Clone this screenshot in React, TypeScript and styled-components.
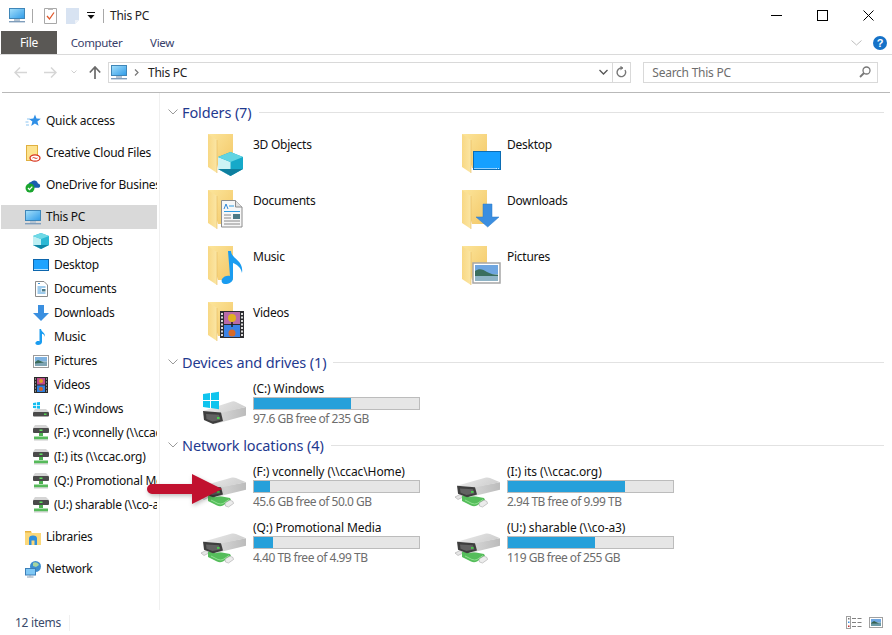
import React from "react";
import styled, { createGlobalStyle } from "styled-components";

const Global = createGlobalStyle`
  html, body { margin: 0; padding: 0; background: #fff; }
  body { font-family: "Noto Sans", "Open Sans", "Liberation Sans", sans-serif; font-size: 12px; color: #000; }
  svg { display: block; flex: none; }
`;

const Page = styled.div`
  position: relative; width: 892px; height: 635px; display: flex; flex-direction: column; overflow: hidden; background: #fff;
  letter-spacing: -0.25px;
`;
const TitleBar = styled.div`height: 31px; display: flex; align-items: center; padding-left: 9px;`;
const QatIcon = styled.div<{ $gap: number }>`margin-right: ${p => p.$gap}px;`;
const QatSep = styled.div<{ $gap: number }>`width: 1px; height: 14px; background: #a8a8a8; margin-right: ${p => p.$gap}px;`;
const TitleText = styled.div`flex: 1; color: #222; margin-left: -1px;`;
const WinButtons = styled.div`display: flex; margin-right: 1px;`;
const WinButton = styled.div`width: 46px; height: 31px; display: flex; align-items: center; justify-content: center;`;

const Tabs = styled.div`height: 24px; box-sizing: border-box; display: flex; align-items: stretch; padding-left: 1px; border-bottom: 1px solid #dadada;`;
const FileTab = styled.div`width: 56px; background: #5a5855; color: #fff; display: flex; align-items: center; justify-content: center;`;
const Tab = styled.div<{ $w: number }>`width: ${p => p.$w}px; color: #38406a; display: flex; align-items: center; justify-content: center; font-size: 11.5px; letter-spacing: -0.35px;`;
const TabRight = styled.div`flex: 1; display: flex; justify-content: flex-end; align-items: center; gap: 11px; padding-right: 5px;`;

const Nav = styled.div`height: 38px; box-sizing: border-box; display: flex; align-items: center; padding: 0 12px 3px 12px; margin: 0 2px; border-bottom: 1px solid #b9b9b9;`;
const NavArrow = styled.div<{ $gap: number }>`margin-right: ${p => p.$gap}px;`;
const Address = styled.div`width: 524px; height: 21px; box-sizing: border-box; border: 1px solid #d9d9d9; display: flex; align-items: center; padding-left: 2px; color: #222;`;
const AddressChevron = styled.svg`margin-left: 7px;`;
const AddressText = styled.div`flex: 1; margin-left: 9px;`;
const AddressEnd = styled.div`width: 17px; height: 100%; border-left: 1px solid #d9d9d9; display: flex; align-items: center; justify-content: center; margin-left: 4px;`;
const Search = styled.div`width: 235px; height: 21px; box-sizing: border-box; border: 1px solid #d9d9d9; margin-left: 12px; display: flex; align-items: center; justify-content: space-between; padding: 0 6px 0 8px; color: #6d6d6d;`;

const Main = styled.div`flex: 1; display: flex; min-height: 0;`;
const Sidebar = styled.div`width: 156px; margin-left: 1px; margin-right: 2px; padding-top: 16px; flex: none; overflow: hidden;`;
const SideGroup = styled.div`margin-bottom: 8px;`;
const SideRow = styled.div<{ $level: number; $active?: boolean }>`
  height: 24px; display: flex; align-items: center; white-space: nowrap; overflow: hidden;
  padding-left: ${p => (p.$level ? 32 : 24)}px;
  background: ${p => (p.$active ? "#d9d9d9" : "transparent")};
  color: #111;
`;
const SideIcon = styled.div`width: 16px; height: 16px; margin-right: 5px; display: flex; align-items: center; justify-content: center; flex: none;`;
const SideLabel = styled.span`padding-bottom: 2px;`;
const Divider = styled.div`width: 1px; background: #f0f0f0; flex: none;`;

const Content = styled.div`flex: 1; padding-top: 9px; min-width: 0;`;
const GroupHeader = styled.div`height: 20px; display: flex; align-items: center; padding: 0 8px 0 8px;`;
const GroupTitle = styled.div`font-size: 14.5px; color: #1f3a8f; margin-left: 4px; letter-spacing: -0.12px;`;
const GroupLine = styled.div`flex: 1; height: 1px; background: #e2e2e2; margin-left: 7px;`;
const FolderGrid = styled.div`display: grid; grid-template-columns: 254px 254px; padding: 8px 0 0 48px; margin-bottom: -2px;`;
const FolderItem = styled.div`height: 56px; display: flex;`;
const ItemText = styled.div`line-height: 16px; padding-top: 7px; color: #111;`;
const DriveGrid = styled.div`display: grid; grid-template-columns: 254px 254px; padding: 7px 0 0 41px;`;
const DriveItem = styled.div`height: 56px; display: flex;`;
const DriveInfo = styled.div`width: 167px;`;
const DriveLabel = styled.div`line-height: 16px; height: 18px; padding-top: 2px; box-sizing: border-box; color: #111; white-space: nowrap; letter-spacing: -0.1px;`;
const Bar = styled.div`height: 13px; box-sizing: border-box; border: 1px solid #bcbcbc; background: #e6e6e6;`;
const BarFill = styled.div<{ $pct: number }>`height: 100%; width: ${p => p.$pct}%; background: #26a0da;`;
const DriveSub = styled.div`line-height: 16px; margin-top: 1px; color: #6d6d6d; white-space: nowrap; letter-spacing: -0.5px;`;

const Status = styled.div`height: 25px; display: flex; align-items: center; padding: 0 9px 0 15px; color: #3a4a6a; flex: none;`;
const StatusText = styled.div`width: 54px;`;
const StatusSep = styled.div`width: 1px; height: 16px; background: #f0f0f0;`;
const StatusRight = styled.div`margin-left: auto; display: flex; gap: 7px; align-items: center;`;
const RedArrow = styled.svg`position: absolute; left: 147px; top: 473px; filter: drop-shadow(1px 2px 2px rgba(0,0,0,.25));`;

/* ---------- small icons ---------- */
const Pc = () => (
  <svg width="16" height="15" viewBox="0 0 16 15">
    <defs><linearGradient id="pcg" x1="0" y1="0" x2="1" y2="1"><stop offset="0" stopColor="#a5e0fb" /><stop offset="1" stopColor="#2f9be8" /></linearGradient></defs>
    <rect x="0.5" y="0.5" width="15" height="10" fill="url(#pcg)" stroke="#3f86b8" />
    <rect x="5" y="11" width="6" height="2" fill="#b5c4d2" />
    <rect x="0" y="13" width="16" height="1.4" fill="#7f9dbb" />
  </svg>
);
const Star = () => (
  <svg width="16" height="15" viewBox="0 0 16 15">
    <path d="M10 0.5l1.5 4 4.3 0.3-3.4 2.7 1.2 4.3-3.700-2.400-3.700 2.600 1.200-4.400-3.400-2.700 4.400-.3z" fill="#2f8fe6" />
    <path d="M2 5h3M0.5 8h3M1 11h3" stroke="#8cc5f2" strokeWidth="1" />
  </svg>
);
const CloudFile = () => (
  <svg width="16" height="17" viewBox="0 0 16 17">
    <rect x="1.5" y="0.5" width="11" height="15" fill="#fde38f" stroke="#e0b040" />
    <ellipse cx="10" cy="13" rx="5" ry="3.2" fill="#fff" stroke="#d8321e" strokeWidth="1.3" />
    <path d="M7.5 13c1-1.6 3.6 1.6 5 0" stroke="#d8321e" fill="none" />
  </svg>
);
const OneDrive = () => (
  <svg width="16" height="15" viewBox="0 0 16 15">
    <path d="M4 9a3 3 0 0 1 2-5 4 4 0 0 1 7 1.500 2.300 2.300 0 0 1 1 4.300H4z" fill="#1a5fb0" />
    <circle cx="5" cy="10" r="4.500" fill="#1aa52e" />
    <path d="M3 10l1.500 1.600 2.800-3" stroke="#fff" strokeWidth="1.300" fill="none" />
  </svg>
);
const Cube = () => (
  <svg width="16" height="16" viewBox="0 0 16 16">
    <path d="M8 0l8 3v9l-8 4-8-4V3z" fill="#2cb8d4" />
    <path d="M0 3l8 3v10l-8-4z" fill="#bdeff3" />
    <path d="M8 0l8 3-8 3-8-3z" fill="#6fd9e6" />
    <path d="M8 12l8 0-8 4-8-4z" fill="#0f86a6" />
  </svg>
);
const Desk = () => (
  <svg width="16" height="12" viewBox="0 0 16 12">
    <rect x="0.500" y="0.500" width="15" height="11" fill="#1ea3ff" stroke="#0d66ad" />
    <rect x="1" y="10" width="14" height="1" fill="#b8e2ff" />
  </svg>
);
const Doc = () => (
  <svg width="13" height="16" viewBox="0 0 13 16">
    <path d="M.5.500h8.500l3.500 3.500v11.500H.5z" fill="#fff" stroke="#8a8a8a" />
    <path d="M3 2.500h2M2.500 6h8M2.500 8h4M2.500 10h4M2.500 12h8" stroke="#3f96d8" />
    <rect x="7" y="8" width="3.500" height="2.500" fill="#4a7a88" />
  </svg>
);
const DownArrow = () => (
  <svg width="16" height="16" viewBox="0 0 16 16">
    <path d="M5 0h6v8h5l-8 8-8-8h5z" fill="#3a8fe0" />
  </svg>
);
const Note = () => (
  <svg width="12" height="16" viewBox="0 0 12 16">
    <path d="M4.500 0h1.500c.3 3 4.500 3.500 4 8-.2-2-2-3-3-3.300v8.300c0 2-2 3-4 3s-3-1-2.500-2.500c.5-1.500 2.500-2 4-1.300z" fill="#1a9cf0" />
  </svg>
);
const Pic = () => (
  <svg width="16" height="13" viewBox="0 0 16 13">
    <rect x="0.500" y="0.500" width="15" height="12" fill="#fff" stroke="#9a9a9a" />
    <rect x="2" y="2" width="12" height="4.500" fill="#7fb2e0" />
    <rect x="2" y="6.500" width="12" height="4.500" fill="#7fa4b4" />
    <path d="M2 7l3-2 6 2.500-9 1z" fill="#3a6a5a" />
  </svg>
);
const Film = () => (
  <svg width="14" height="16" viewBox="0 0 14 16">
    <rect width="14" height="16" fill="#2a2a2a" />
    <rect x="3" y="1" width="8" height="6.500" fill="#c04a8a" />
    <rect x="3" y="8.500" width="8" height="6.500" fill="#2f7fe0" />
    <circle cx="7" cy="4" r="2" fill="#e0a020" />
    <circle cx="7" cy="12" r="2" fill="#d06020" />
    <path d="M1 2h1M1 5h1M1 8h1M1 11h1M1 14h1M12 2h1M12 5h1M12 8h1M12 11h1M12 14h1" stroke="#ddd" />
  </svg>
);
const SmallWinDrive = () => (
  <svg width="16" height="15" viewBox="0 0 16 15">
    <path d="M0 1l3-.5v2.500H0zM3.800.300L7 0v3H3.800zM0 3.800h3v2.500l-3-.4zM3.800 3.800H7v3l-3.200-.4z" fill="#14bdf0" />
    <path d="M2 7h11l3 3H0z" fill="#d5d5d5" />
    <rect x="0" y="10" width="16" height="4.500" rx="1" fill="#4a4a4a" />
    <rect x="11" y="11.500" width="2.500" height="1.500" fill="#4fd04f" />
  </svg>
);
const SmallNetDrive = () => (
  <svg width="16" height="16" viewBox="0 0 16 16">
    <path d="M2 0h11l3 3H0z" fill="#d5d5d5" />
    <rect x="0" y="3" width="16" height="5" rx="1" fill="#4a4a4a" />
    <rect x="6.500" y="4.500" width="3" height="1.500" fill="#5fe05f" />
    <path d="M6 8h4v3H6z" fill="#4cb050" />
    <path d="M1 11.500h14v3H1z" fill="#56ba5a" />
    <path d="M1 14.500h14v1H1z" fill="#c8c8c8" />
  </svg>
);
const Lib = () => (
  <svg width="16" height="15" viewBox="0 0 16 15">
    <path d="M0 1h6l1 2h9v12H0z" fill="#fbd87a" />
    <path d="M0 1h6v1.500H0z" fill="#e8b340" />
    <path d="M4 15V8.500a4 3 0 0 1 8 0V15h-2.500V10.500h-3V15z" fill="#2f8fdd" />
  </svg>
);
const Net = () => (
  <svg width="16" height="17" viewBox="0 0 16 17">
    <circle cx="10.500" cy="5.500" r="5.500" fill="#3e8fcf" />
    <path d="M8 2c2-1.500 5-.5 6 2l-3 2-3-1z" fill="#a8d6a0" />
    <rect x="0.500" y="7.500" width="10" height="6.500" fill="#7fc8f5" stroke="#3d7fb8" />
    <path d="M5 14v1.500M2 16h6.500" stroke="#8aa0b4" />
  </svg>
);

/* ---------- large icons ---------- */
const FolderBase = () => (
  <>
    <defs>
      <linearGradient id="fb" x1="0" y1="0" x2="1" y2="1"><stop offset="0" stopColor="#fce59b" /><stop offset="1" stopColor="#f3c766" /></linearGradient>
      <linearGradient id="ff" x1="0" y1="0" x2="1" y2="0"><stop offset="0" stopColor="#f8d884" /><stop offset="1" stopColor="#fbe6a5" /></linearGradient>
    </defs>
    <path d="M0 4h25v34H10z" fill="url(#fb)" />
    <path d="M0 4l9 6v33l-9-6z" fill="url(#ff)" />
    <path d="M9 10v33" stroke="#e6bb5e" strokeWidth="0.600" />
  </>
);
const overlays: Record<string, React.ReactNode> = {
  cube: (
    <>
      <path d="M22.500 22l12.500 5v12l-12.500 7-12.500-7V27z" fill="#16a9c9" />
      <path d="M10 27l12.500 5v14l-12.500-7z" fill="#cdf3f5" />
      <path d="M22.500 22l12.500 5-12.500 5-12.500-5z" fill="#62d4e2" />
      <path d="M22.500 39l12.500 0-12.500 7-12.500-7z" fill="#0e7f9f" />
    </>
  ),
  desktop: (
    <>
      <rect x="11.500" y="21.500" width="27" height="18" fill="#16a0ff" stroke="#0b6cb3" />
      <path d="M12 38.500h26" stroke="#cbeaff" strokeDasharray="1 1" />
      <path d="M12 38.500h22" stroke="#8fd0ff" />
    </>
  ),
  doc: (
    <>
      <path d="M13.500 14.500h14l6.500 6.500v20H13.500z" fill="#f7f7f7" stroke="#8c8c8c" />
      <path d="M27.500 14.500v6.500h6.500" fill="#e2e2e2" stroke="#8c8c8c" />
      <path d="M16 23l2-5 2 5" stroke="#2f88d8" fill="none" />
      <path d="M21 20h5M16 25.500h16" stroke="#2f9be0" />
      <path d="M16 29h7M16 32h7M16 35h16M16 38h16" stroke="#888" />
      <rect x="25" y="28" width="7" height="5" fill="#4d7a86" />
    </>
  ),
  down: <path d="M21 18h9v13h7L25.700 41 14 31h7z" fill="#3b8ee0" stroke="#2a78c8" strokeWidth="0.500" />,
  music: (
    <path d="M20 9h3c.3 8 13 9 11 22-1-6-6-9-9-10v15c0 4-4 6-8 6-3 0-4-3-3-5 1.500-3 6-4 8-3z" fill="#1a9cf0" />
  ),
  pic: (
    <>
      <rect x="11" y="21" width="27" height="20" fill="#fff" stroke="#a6a6a6" strokeWidth="1.500" />
      <rect x="13" y="23" width="23" height="9" fill="#6fa6e0" />
      <rect x="13" y="32" width="23" height="7" fill="#8fb4c6" />
      <path d="M13 29c4-3 8-2 12 1 4 2 7 3 11 3v1H13z" fill="#3a6e5e" />
    </>
  ),
  film: (
    <>
      <rect x="12" y="13" width="24" height="27" fill="#2c2c30" />
      <rect x="16" y="14" width="16" height="12" fill="#b86aa8" />
      <rect x="16" y="27" width="16" height="12" fill="#3a82e6" />
      <circle cx="24" cy="20" r="4" fill="#e0b020" />
      <circle cx="24" cy="35" r="3.500" fill="#d86a28" />
      <path d="M24 24v5" stroke="#222" strokeWidth="1.500" />
      <path d="M14 15v24M34 15v24" stroke="#ddd" strokeWidth="2" strokeDasharray="2 1.500" />
    </>
  ),
};
const FolderIcon = ({ kind }: { kind: string }) => (
  <svg width="45" height="48" viewBox="0 0 45 48"><FolderBase />{overlays[kind]}</svg>
);
const DriveShape = () => (
  <>
    <defs>
      <linearGradient id="dt" x1="0" y1="0" x2="1" y2="0.300"><stop offset="0" stopColor="#ececec" /><stop offset="1" stopColor="#d0d0d0" /></linearGradient>
      <linearGradient id="ds" x1="0" y1="0" x2="1" y2="0"><stop offset="0" stopColor="#d9d9d9" /><stop offset="1" stopColor="#bcbcbc" /></linearGradient>
    </defs>
    <path d="M20 33L45 28v8.500L14 45z" fill="url(#ds)" />
    <path d="M2 32L31 22.500q2-.5 4 .5L45 28 20 34z" fill="url(#dt)" />
    <path d="M2 32L20 33.500 22 42 12 45 3 41z" fill="#3e3e3e" />
    <path d="M5 35l13 .8 1.500 5-8 1.700-6-2.500z" fill="#626262" />
    <rect x="16" y="38" width="2.500" height="2" fill="#46d04a" />
  </>
);
const WinDrive = () => (
  <svg width="52" height="48" viewBox="0 0 52 48">
    <DriveShape />
    <path d="M2 15l7-1v7H2zM10 14l8-1.200V21h-8zM2 22h7v7l-7-1zM10 22h8v8.200L10 29z" fill="#10c4ee" />
  </svg>
);
const NetDrive = () => (
  <svg width="52" height="48" viewBox="0 0 52 48">
    <path d="M0 35l5-2.500 3 2.500-5 2.500z" fill="#e6e6e6" stroke="#9a9a9a" strokeWidth="0.500" />
    <path d="M7 33.500l14 1 8 1.500 1 2-8 5.500q-3 1.500-6 0L7 39z" fill="#55bd5b" />
    <path d="M10 38l7 3.500q3 1 5 0l6-4" fill="none" stroke="#8ee08e" strokeWidth="1" />
    <g transform="translate(0 -4) scale(1 .87)"><DriveShape /></g>
    <path d="M24 41l5-3 3 1.500 .5 2-5 3.500-3-1z" fill="#ececec" stroke="#9a9a9a" strokeWidth="0.500" />
  </svg>
);
const Chevron = () => (
  <svg width="10" height="6" viewBox="0 0 10 6"><path d="M.5.500L5 5 9.500.500" fill="none" stroke="#9a9a9a" /></svg>
);

const side: { groups: { level: number; label: string; icon: React.ReactNode; active?: boolean }[][] } = {
  groups: [
    [{ level: 0, label: "Quick access", icon: <Star /> }],
    [{ level: 0, label: "Creative Cloud Files", icon: <CloudFile /> }],
    [{ level: 0, label: "OneDrive for Business", icon: <OneDrive /> }],
    [
      { level: 0, label: "This PC", icon: <Pc />, active: true },
      { level: 1, label: "3D Objects", icon: <Cube /> },
      { level: 1, label: "Desktop", icon: <Desk /> },
      { level: 1, label: "Documents", icon: <Doc /> },
      { level: 1, label: "Downloads", icon: <DownArrow /> },
      { level: 1, label: "Music", icon: <Note /> },
      { level: 1, label: "Pictures", icon: <Pic /> },
      { level: 1, label: "Videos", icon: <Film /> },
      { level: 1, label: "(C:) Windows", icon: <SmallWinDrive /> },
      { level: 1, label: "(F:) vconnelly (\\\\ccac\\Home)", icon: <SmallNetDrive /> },
      { level: 1, label: "(I:) its (\\\\ccac.org)", icon: <SmallNetDrive /> },
      { level: 1, label: "(Q:) Promotional Media", icon: <SmallNetDrive /> },
      { level: 1, label: "(U:) sharable (\\\\co-a3)", icon: <SmallNetDrive /> },
    ],
    [{ level: 0, label: "Libraries", icon: <Lib /> }],
    [{ level: 0, label: "Network", icon: <Net /> }],
  ],
};

const folders = [
  ["3D Objects", "cube"], ["Desktop", "desktop"], ["Documents", "doc"], ["Downloads", "down"],
  ["Music", "music"], ["Pictures", "pic"], ["Videos", "film"],
];
const netDrives = [
  ["(F:) vconnelly (\\\\ccac\\Home)", 9.5, "45.6 GB free of 50.0 GB"],
  ["(I:) its (\\\\ccac.org)", 71, "2.94 TB free of 9.99 TB"],
  ["(Q:) Promotional Media", 11.5, "4.40 TB free of 4.99 TB"],
  ["(U:) sharable (\\\\co-a3)", 53, "119 GB free of 255 GB"],
] as [string, number, string][];

const Group = ({ title }: { title: string }) => (
  <GroupHeader><Chevron /><GroupTitle>{title}</GroupTitle><GroupLine /></GroupHeader>
);
const Drive = ({ label, pct, sub, icon }: { label: string; pct: number; sub: string; icon: React.ReactNode }) => (
  <DriveItem>
    {icon}
    <DriveInfo>
      <DriveLabel>{label}</DriveLabel>
      <Bar><BarFill $pct={pct} /></Bar>
      <DriveSub>{sub}</DriveSub>
    </DriveInfo>
  </DriveItem>
);

export default function App() {
  return (
    <Page>
      <Global />
      <TitleBar>
        <QatIcon $gap={7}><Pc /></QatIcon>
        <QatSep $gap={11} />
        <QatIcon $gap={9}>
          <svg width="13" height="16" viewBox="0 0 13 16"><path d="M.5.500h12v15H.5z" fill="#fff" stroke="#a8a8a8" /><path d="M3 8l2.500 3L10 4.500" stroke="#e0572a" strokeWidth="1.300" fill="none" /><path d="M4 .5h5v1.500H4z" fill="#bbb" /></svg>
        </QatIcon>
        <QatIcon $gap={8}>
          <svg width="13" height="16" viewBox="0 0 13 16"><path d="M0 0h9v0l4 0v12l-4 4H0z" fill="#d8e3f2" /><path d="M9 16v-4h4z" fill="#eef2f8" /></svg>
        </QatIcon>
        <QatIcon $gap={8}>
          <svg width="8" height="7" viewBox="0 0 8 7"><path d="M0 0h8v1H0zM0.500 3h7L4 7z" fill="#111" /></svg>
        </QatIcon>
        <QatSep $gap={7} />
        <TitleText>This PC</TitleText>
        <WinButtons>
          <WinButton><svg width="11" height="1" viewBox="0 0 11 1"><rect width="11" height="1" fill="#000" /></svg></WinButton>
          <WinButton><svg width="11" height="11" viewBox="0 0 11 11"><rect x=".5" y=".5" width="10" height="10" fill="none" stroke="#000" /></svg></WinButton>
          <WinButton><svg width="11" height="11" viewBox="0 0 11 11"><path d="M.5.500l10 10M10.500.500l-10 10" stroke="#000" /></svg></WinButton>
        </WinButtons>
      </TitleBar>
      <Tabs>
        <FileTab>File</FileTab>
        <Tab $w={79}>Computer</Tab>
        <Tab $w={52}>View</Tab>
        <TabRight>
          <svg width="11" height="6" viewBox="0 0 11 6"><path d="M.5.500L5.500 5l5-4.500" fill="none" stroke="#bdbdbd" /></svg>
          <svg width="14" height="14" viewBox="0 0 14 14">
            <circle cx="7" cy="7" r="7" fill="#1672c8" />
            <text x="7" y="11" textAnchor="middle" fontSize="11" fontWeight="700" fill="#fff" fontFamily="Liberation Sans">?</text>
          </svg>
        </TabRight>
      </Tabs>
      <Nav>
        <NavArrow $gap={17}><svg width="13" height="11" viewBox="0 0 13 11"><path d="M6 .5L1 5.500l5 5M1 5.500h12" fill="none" stroke="#d6d6d6" strokeWidth="1.500" /></svg></NavArrow>
        <NavArrow $gap={14}><svg width="13" height="11" viewBox="0 0 13 11"><path d="M7 .5l5 5-5 5M12 5.500H0" fill="none" stroke="#d6d6d6" strokeWidth="1.500" /></svg></NavArrow>
        <NavArrow $gap={12}><svg width="6" height="4" viewBox="0 0 6 4"><path d="M.5.500L3 3 5.500.500" fill="none" stroke="#d0d0d0" /></svg></NavArrow>
        <NavArrow $gap={7}><svg width="12" height="13" viewBox="0 0 12 13"><path d="M.8 6.500L6 1l5.200 5.500M6 1v12" fill="none" stroke="#6a6a6a" strokeWidth="1.700" /></svg></NavArrow>
        <Address>
          <Pc />
          <AddressChevron width="5" height="7" viewBox="0 0 5 7"><path d="M1 .5l3 3-3 3" fill="none" stroke="#777" strokeWidth="1.200" /></AddressChevron>
          <AddressText>This PC</AddressText>
          <svg width="9" height="6" viewBox="0 0 9 6"><path d="M.5 1l4 4 4-4" fill="none" stroke="#555" strokeWidth="1.300" /></svg>
          <AddressEnd>
            <svg width="11" height="12" viewBox="0 0 11 12"><path d="M9 4a4.300 4.300 0 1 1-3.500-2H7" fill="none" stroke="#777" strokeWidth="1.400" /><path d="M3.500 0v5l2.500-2.500z" fill="#777" transform="translate(1 -.5)" /></svg>
          </AddressEnd>
        </Address>
        <Search>
          Search This PC
          <svg width="12" height="12" viewBox="0 0 12 12"><circle cx="7.500" cy="4.500" r="3.500" fill="none" stroke="#777" strokeWidth="1.300" /><path d="M5 7L1 11" stroke="#777" strokeWidth="1.800" /></svg>
        </Search>
      </Nav>
      <Main>
        <Sidebar>
          {side.groups.map((g, i) => (
            <SideGroup key={i}>
              {g.map(r => (
                <SideRow key={r.label} $level={r.level} $active={r.active}>
                  <SideIcon>{r.icon}</SideIcon>
                  <SideLabel>{r.label}</SideLabel>
                </SideRow>
              ))}
            </SideGroup>
          ))}
        </Sidebar>
        <Divider />
        <Content>
          <Group title="Folders (7)" />
          <FolderGrid>
            {folders.map(([label, kind]) => (
              <FolderItem key={label}><FolderIcon kind={kind} /><ItemText>{label}</ItemText></FolderItem>
            ))}
            <FolderItem />
          </FolderGrid>
          <Group title="Devices and drives (1)" />
          <DriveGrid>
            <Drive label="(C:) Windows" pct={59} sub="97.6 GB free of 235 GB" icon={<WinDrive />} />
          </DriveGrid>
          <Group title="Network locations (4)" />
          <DriveGrid>
            {netDrives.map(([label, pct, sub]) => (
              <Drive key={label} label={label} pct={pct} sub={sub} icon={<NetDrive />} />
            ))}
          </DriveGrid>
        </Content>
      </Main>
      <Status>
        <StatusText>12 items</StatusText>
        <StatusSep />
        <StatusRight>
          <svg width="16" height="13" viewBox="0 0 16 13">
            <rect x=".5" y=".5" width="4" height="12" fill="#fff" stroke="#a0a0a0" />
            <rect x="2" y="2" width="1.500" height="1.500" fill="#777" /><rect x="2" y="5.500" width="1.500" height="1.500" fill="#3a8fe0" /><rect x="2" y="9.500" width="1.500" height="1.500" fill="#c03030" />
            <path d="M6 2.500h4M11.500 2.500h4M6 6.500h4M11.500 6.500h4M6 10.500h4M11.500 10.500h4" stroke="#808080" />
          </svg>
          <svg width="14" height="11" viewBox="0 0 14 11">
            <rect x=".5" y=".5" width="13" height="10" fill="#fff" stroke="#a0a0a0" strokeWidth="1" />
            <rect x="2" y="2" width="10" height="3.500" fill="#6fa6e0" /><rect x="2" y="5.500" width="10" height="3.500" fill="#6a9aa6" />
            <path d="M2 6l3-2 5 2.500H2z" fill="#35604f" />
          </svg>
        </StatusRight>
      </Status>
      <RedArrow width="76" height="34" viewBox="0 0 76 34">
        <path d="M5 11H45V1L75 16 45 31V21H5a5 5 0 0 1 0-10z" fill="#c1112f" />
      </RedArrow>
    </Page>
  );
}
